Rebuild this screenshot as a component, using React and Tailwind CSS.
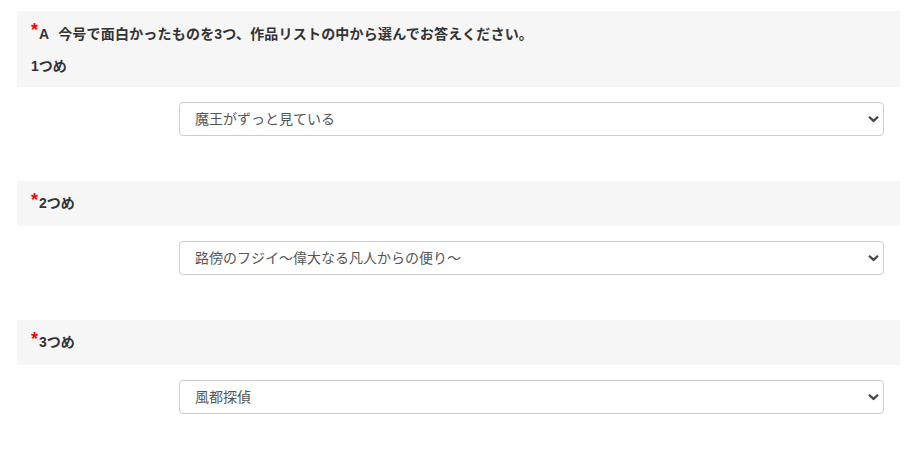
const QUESTIONS = [
  { id: 1, title: '今号で面白かったものを3つ、作品リストの中から選んでお答えください。', label: '1つめ', value: '魔王がずっと見ている' },
  { id: 2, label: '2つめ', value: '路傍のフジイ～偉大なる凡人からの便り～' },
  { id: 3, label: '3つめ', value: '風都探偵' },
]

function Star() {
  return <span className="text-[#ff0000] text-[18px] font-bold leading-none relative top-[-4px] mr-[1px]">*</span>
}

function Chevron() {
  return (
    <svg width="11" height="7" viewBox="0 0 11 7" className="absolute right-[5px] top-1/2 -translate-y-1/2 pointer-events-none">
      <path d="M1 1.2 L5.5 5.4 L10 1.2" fill="none" stroke="#444" strokeWidth="2.2" />
    </svg>
  )
}

export default function App() {
  return (
    <div className="w-[922px] h-[454px] bg-white pt-[11px] pl-[17px] pr-[22px] text-[#333]" style={{ fontFamily: '"Liberation Sans", "Noto Sans CJK JP", sans-serif' }}>
      {QUESTIONS.map(q => (
        <div key={q.id} className="mb-[45px]">
          {q.title ? (
            <div className="bg-[#f6f6f6] px-[14px] pt-[12px] pb-[10px] text-[14px] font-bold">
              <div className="leading-[22px] flex items-center">
                <Star />
                <span>A</span>
                <span className="ml-[9px] tracking-[0.2px]">{q.title}</span>
              </div>
              <div className="leading-[22px] mt-[10px]">{q.label}</div>
            </div>
          ) : (
            <div className="bg-[#f6f6f6] px-[14px] h-[45px] flex items-center text-[14px] font-bold">
              <Star />
              <span>{q.label}</span>
            </div>
          )}
          <div className="mt-[15px] ml-[162px] mr-[16px] relative">
            <select
              defaultValue={q.value}
              className="appearance-none w-full h-[34px] border border-[#ccc] rounded-[4px] bg-white pl-[15px] pr-[24px] text-[14px] text-[#555] outline-none"
              style={{ fontFamily: '"Liberation Sans", "Noto Sans CJK JP", sans-serif' }}
            >
              <option>{q.value}</option>
            </select>
            <Chevron />
          </div>
        </div>
      ))}
    </div>
  )
}
